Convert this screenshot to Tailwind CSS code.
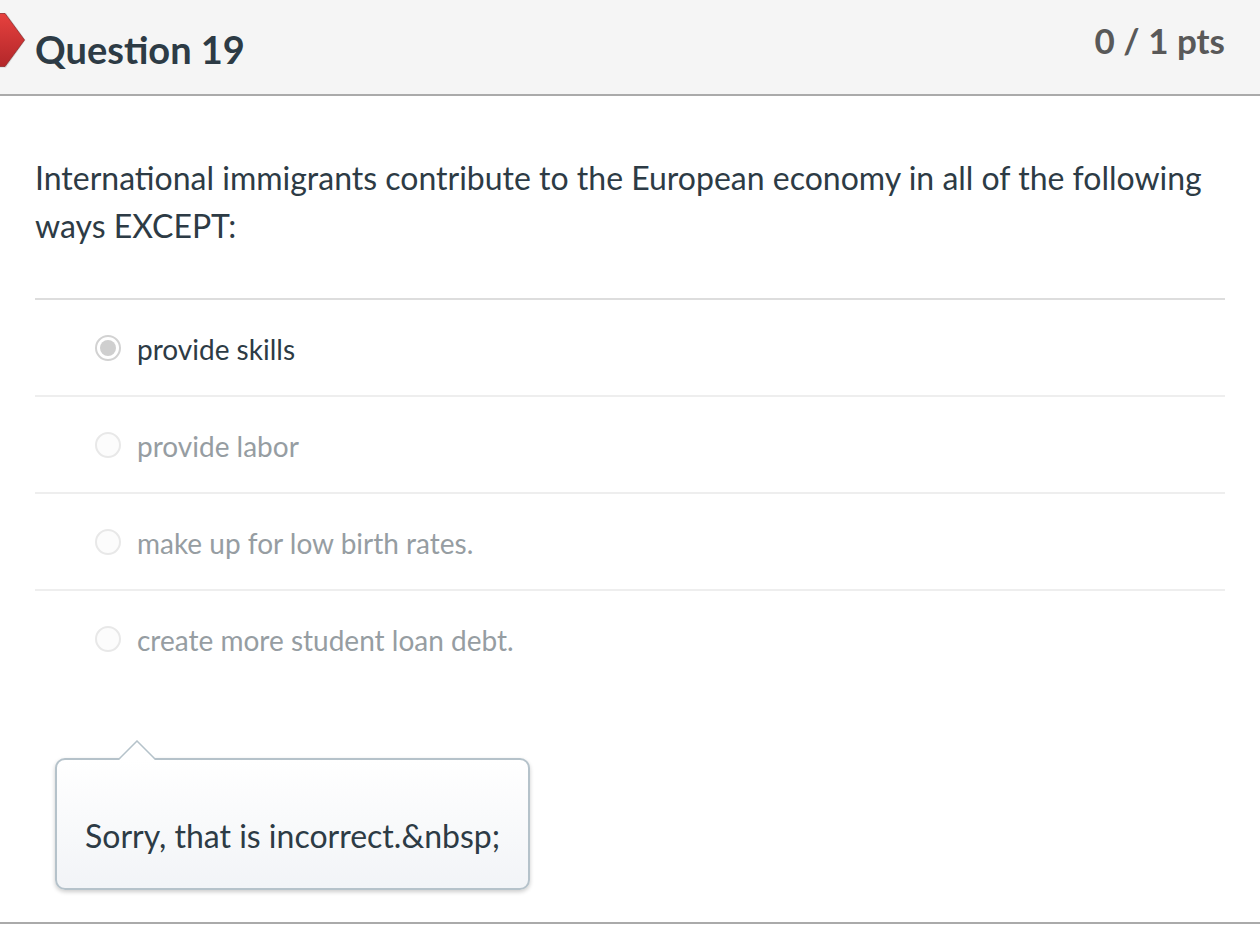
<!DOCTYPE html>
<html lang="en">
<head>
  <meta charset="UTF-8">
  <meta name="viewport" content="width=device-width, initial-scale=1.0">
  <title>Question 19</title>
  <script src="https://cdn.jsdelivr.net/npm/@tailwindcss/browser@4"></script>
</head>
<body class="bg-white text-[#2d3b45] font-['Lato',sans-serif] text-[32px] leading-12">

  <section class="border-b-2 border-[#aaaaaa] pb-8">
    <header class="relative flex items-start justify-between px-[35px] pb-[21px] bg-[#f5f5f5] border-b-2 border-[#aaaaaa]">
      <!-- incorrect answer arrow -->
      <svg class="absolute left-0 top-3 w-7 h-14" viewBox="0 0 28 56" aria-hidden="true">
        <defs>
          <linearGradient id="flag" x1="0" y1="0" x2="0" y2="1">
            <stop offset="0" stop-color="#e6413e" />
            <stop offset="1" stop-color="#b3272a" />
          </linearGradient>
        </defs>
        <path d="M-4 1H6L25.500 28L6 55.500H-4Z" fill="#000" fill-opacity="0.15" />
        <path d="M-4 1.500H5L24.500 28L5 54.500H-4Z" fill="url(#flag)" stroke="#8f2224" stroke-opacity="0.7" />
      </svg>
      <h1 class="pt-[25px] text-[38px] font-bold">Question 19</h1>
      <div class="pt-4 text-[35px] font-bold text-[#595959]">0 / 1 pts</div>
    </header>

    <div class="px-[35px] pt-[58px]">
      <p id="question">International immigrants contribute to the European economy in all of the following ways EXCEPT:</p>

      <div role="radiogroup" aria-labelledby="question" class="mt-12 text-[28px] border-t-2 border-[#dddddd] divide-y-2 divide-[#eeeeee]">
        <div class="flex items-start pl-15 pt-[25px] pb-[22px]">
          <input type="radio" id="answer1" name="answer" checked disabled class="appearance-none shrink-0 mt-[10px] mr-4 size-[26px] rounded-full border-2 border-[#d2d2d2] bg-[#cfcfcf] bg-clip-content p-[3px]">
          <label for="answer1">provide skills</label>
        </div>
        <div class="flex items-start pl-15 pt-[25px] pb-[22px] text-[#969da2]">
          <input type="radio" id="answer2" name="answer" disabled class="appearance-none shrink-0 mt-[10px] mr-4 size-[26px] rounded-full border-2 border-[#e8e8e8] bg-[#fcfcfc]">
          <label for="answer2">provide labor</label>
        </div>
        <div class="flex items-start pl-15 pt-[25px] pb-[22px] text-[#969da2]">
          <input type="radio" id="answer3" name="answer" disabled class="appearance-none shrink-0 mt-[10px] mr-4 size-[26px] rounded-full border-2 border-[#e8e8e8] bg-[#fcfcfc]">
          <label for="answer3">make up for low birth rates.</label>
        </div>
        <div class="flex items-start pl-15 pt-[25px] pb-[22px] text-[#969da2]">
          <input type="radio" id="answer4" name="answer" disabled class="appearance-none shrink-0 mt-[10px] mr-4 size-[26px] rounded-full border-2 border-[#e8e8e8] bg-[#fcfcfc]">
          <label for="answer4">create more student loan debt.</label>
        </div>
      </div>

      <div class="relative w-fit mt-[72px] ml-5 px-7 pt-[52px] pb-7 rounded-[10px] border-2 border-[#b5c2ca] bg-linear-to-b from-white to-[#f2f4f7] shadow-[0_2px_4px_rgba(0,0,0,0.2)]">
        <!-- comment pointer -->
        <svg class="absolute left-[61px] -top-5 w-10 h-5" viewBox="0 0 40 20" aria-hidden="true">
          <path d="M1 20V19.500L19 1.500L37 19.500V20Z" fill="#fff" />
          <path d="M0.500 19.500L19 1L37.500 19.500" fill="none" stroke="#b5c2ca" stroke-width="1.500" />
        </svg>
        <p>Sorry, that is incorrect.&amp;nbsp;</p>
      </div>
    </div>
  </section>

</body>
</html>
